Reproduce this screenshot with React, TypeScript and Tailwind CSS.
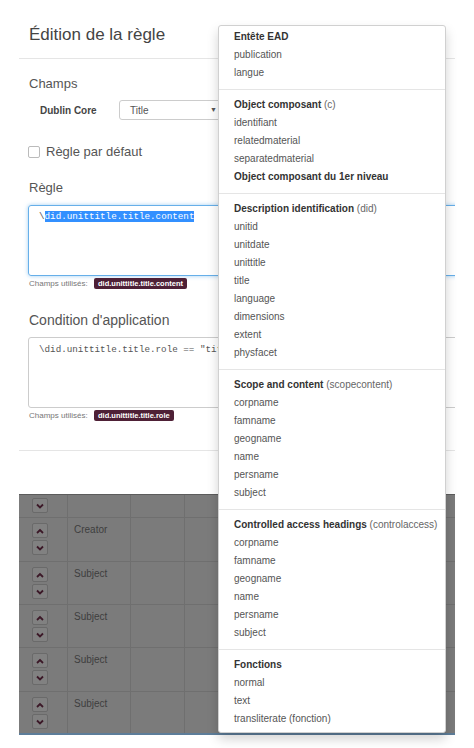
import React from 'react';

type Item = { label: string; bold?: boolean };
type Section = { title: string; tag?: string; items: Item[] };

const sections: Section[] = [
  { title: 'Entête EAD', items: [{ label: 'publication' }, { label: 'langue' }] },
  {
    title: 'Object composant',
    tag: '(c)',
    items: [
      { label: 'identifiant' },
      { label: 'relatedmaterial' },
      { label: 'separatedmaterial' },
      { label: 'Object composant du 1er niveau', bold: true },
    ],
  },
  {
    title: 'Description identification',
    tag: '(did)',
    items: ['unitid', 'unitdate', 'unittitle', 'title', 'language', 'dimensions', 'extent', 'physfacet'].map((l) => ({ label: l })),
  },
  {
    title: 'Scope and content',
    tag: '(scopecontent)',
    items: ['corpname', 'famname', 'geogname', 'name', 'persname', 'subject'].map((l) => ({ label: l })),
  },
  {
    title: 'Controlled access headings',
    tag: '(controlaccess)',
    items: ['corpname', 'famname', 'geogname', 'name', 'persname', 'subject'].map((l) => ({ label: l })),
  },
  {
    title: 'Fonctions',
    items: ['normal', 'text', 'transliterate (fonction)'].map((l) => ({ label: l })),
  },
];

const rows = [
  { label: 'Creator', h: 'h-[44px]' },
  { label: 'Subject', h: 'h-[43px]' },
  { label: 'Subject', h: 'h-[43px]' },
  { label: 'Subject', h: 'h-[44px]' },
  { label: 'Subject', h: 'h-[44px]' },
];

function Chevron({ up }: { up?: boolean }) {
  return (
    <svg width="8" height="6" viewBox="0 0 8 6">
      <polyline
        points={up ? '1,5 4,2 7,5' : '1,1.5 4,4.5 7,1.5'}
        fill="none"
        stroke="#3b1827"
        strokeWidth="1.8"
      />
    </svg>
  );
}

function MoveBtn({ up }: { up?: boolean }) {
  return (
    <div className="w-[16px] h-[15px] border border-[#6a6a6a] bg-[#818181] rounded-[2px] flex items-center justify-center">
      <Chevron up={up} />
    </div>
  );
}

function EmptyCells() {
  return (
    <>
      <div className="border-r border-[#6f6f6f]" />
      <div className="border-r border-[#6f6f6f]" />
      <div className="border-r border-[#6f6f6f]" />
      <div className="border-r border-[#6f6f6f]" />
      <div />
    </>
  );
}

export default function App() {
  return (
    <div className="relative w-[474px] h-[748px] bg-white overflow-hidden font-['Liberation_Sans',Arial,sans-serif]">
      <div className="ml-[19px] w-[436px] overflow-hidden">
        {/* header */}
        <div className="h-[59px] border-b border-[#e5e5e5] pl-[10px] pt-[25px]">
          <h4 className="text-[17px] leading-[20px] text-[#444]">Édition de la règle</h4>
        </div>

        {/* body */}
        <div className="pl-[9px] pt-[15px]">
          <div className="pl-[1px] text-[13px] leading-[20px] text-[#555]">Champs</div>
          <div className="mt-[6px] h-[20px] flex items-center">
            <span className="pl-[12px] w-[91px] text-[10px] font-bold text-[#444]">Dublin Core</span>
            <div className="w-[106px] h-[20px] border border-[#ccc] rounded-[3px] flex items-center justify-between pl-[10px] pr-[7px]">
              <span className="text-[10px] text-[#555]">Title</span>
              <span className="text-[7px] text-[#555]">▼</span>
            </div>
          </div>
          <div className="mt-[22px] h-[20px] flex items-center gap-[6px]">
            <div className="w-[12px] h-[12px] border border-[#bbb] rounded-[2px] bg-white" />
            <span className="text-[13px] text-[#555]">Règle par défaut</span>
          </div>
          <div className="mt-[16px] pl-[1px] text-[13px] leading-[20px] text-[#555]">Règle</div>
          <div className="mt-[7px] w-[440px] h-[71px] border border-[#66afe9] rounded-[3px] shadow-[0_0_4px_rgba(102,175,233,0.6)] pl-[10px] pt-[5px] font-['Liberation_Mono',monospace] text-[9.25px] leading-[12px] text-[#555] whitespace-pre">
            \<span className="bg-[#3390ff] text-white">did.unittitle.title.content</span>
          </div>
          <div className="mt-[2px] h-[11px] flex items-center">
            <span className="w-[66px] pl-[1px] text-[8px] text-[#777]">Champs utilisés:</span>
            <span className="h-[11px] px-[4px] rounded-[2px] bg-[#4e2036] text-white font-bold text-[7.5px] leading-[11px]">
              did.unittitle.title.content
            </span>
          </div>
          <div className="mt-[21px] pl-[1px] text-[14px] leading-[20px] text-[#555]">Condition d'application</div>
          <div className="mt-[7px] w-[440px] h-[71px] border border-[#ccc] rounded-[3px] pl-[10px] pt-[6px] font-['Liberation_Mono',monospace] text-[9.25px] leading-[12px] text-[#555] whitespace-pre">
            {'\\did.unittitle.title.role == "title"'}
          </div>
          <div className="mt-[2px] h-[11px] flex items-center">
            <span className="w-[66px] pl-[1px] text-[8px] text-[#777]">Champs utilisés:</span>
            <span className="h-[11px] px-[4px] rounded-[2px] bg-[#4e2036] text-white font-bold text-[7.5px] leading-[11px]">
              did.unittitle.title.role
            </span>
          </div>
        </div>

        {/* footer */}
        <div className="mt-[29px] h-[44px] border-t border-[#e5e5e5]" />

        {/* table behind backdrop */}
        <div className="h-[241px] bg-[#7b7b7b] border-t border-[#5c5c5c] border-b-2 border-b-[#5d7d99] overflow-hidden">
          <div className="grid grid-cols-[49px_63px_54px_70px_70px_70px_1fr] h-[23px] border-b border-[#6f6f6f]">
            <div className="border-r border-[#6f6f6f] pl-[13px] pt-[3px]">
              <MoveBtn />
            </div>
            <div className="border-r border-[#6f6f6f]" />
            <EmptyCells />
          </div>
          {rows.map((r, i) => (
            <div key={i} className={`grid grid-cols-[49px_63px_54px_70px_70px_70px_1fr] ${r.h} border-b border-[#6f6f6f]`}>
              <div className="border-r border-[#6f6f6f] pl-[13px] pt-[5px] flex flex-col gap-[2px]">
                <MoveBtn up />
                <MoveBtn />
              </div>
              <div className="border-r border-[#6f6f6f] pl-[6px] pt-[6px] text-[10px] leading-[12px] text-[#3e3e3e]">
                {r.label}
              </div>
              <EmptyCells />
            </div>
          ))}
        </div>
      </div>

      {/* dropdown menu */}
      <div className="absolute left-[218px] top-[25px] w-[228px] bg-white border border-[#d0d0d0] rounded-[3px] shadow-[0_6px_12px_rgba(0,0,0,0.175)] text-[10px] leading-[18px]">
        {sections.map((s, i) => (
          <div
            key={i}
            className={
              i === 0
                ? 'pl-[15px] pt-[2px] pb-[7px]'
                : i === sections.length - 1
                  ? 'pl-[15px] pt-[6px] pb-[4px] border-t border-[#e5e5e5]'
                  : 'pl-[15px] pt-[6px] pb-[7px] border-t border-[#e5e5e5]'
            }
          >
            <div className="text-[#333]">
              <span className="font-bold">{s.title}</span>
              {s.tag && <span className="text-[#666]"> {s.tag}</span>}
            </div>
            {s.items.map((it, j) => (
              <div key={j} className={it.bold ? 'font-bold text-[#333]' : 'text-[#555]'}>
                {it.label}
              </div>
            ))}
          </div>
        ))}
      </div>
    </div>
  );
}
